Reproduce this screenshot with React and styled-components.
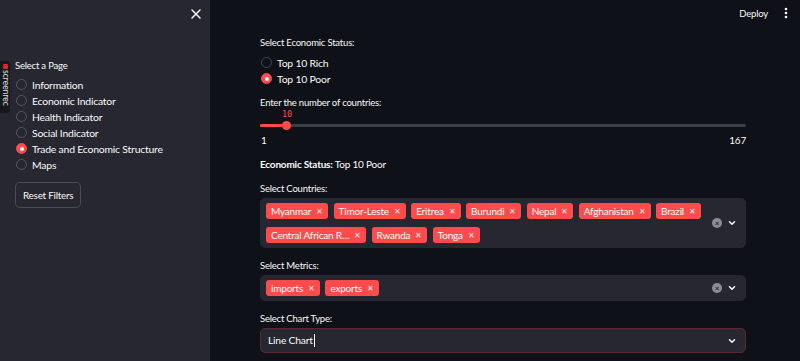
import React from 'react';
import styled, { createGlobalStyle } from 'styled-components';

const GlobalStyle = createGlobalStyle`
  html, body { margin: 0; padding: 0; background: #0e1117; }
  body { font-family: Lato, "Noto Sans", sans-serif; color: #fafafa; letter-spacing: -0.2px; }
  * { box-sizing: border-box; }
`;

const RED = '#ff4b4b';

const Page = styled.div`
  display: flex;
  width: 800px;
  height: 361px;
  overflow: hidden;
  background: #0e1117;
`;

const Sidebar = styled.aside`
  position: relative;
  width: 210px;
  flex: none;
  background: #262730;
  padding: 0 15px;
`;

const SideTop = styled.div`
  display: flex;
  justify-content: flex-end;
  height: 28px;
  padding-top: 7px;
  margin-right: -8px;
  color: #fafafa;
`;

const ScreenRec = styled.div`
  position: absolute;
  left: 0;
  top: 61px;
  width: 10px;
  height: 52px;
  background: #17181d;
  border-radius: 0 3px 3px 0;
  display: flex;
  flex-direction: column;
  align-items: center;
  padding-top: 3px;
  span.dot {
    width: 5px;
    height: 5px;
    background: #e02424;
    border-radius: 1px;
  }
  span.txt {
    writing-mode: vertical-rl;
    font-size: 8.5px;
    line-height: 9px;
    color: #e0e0e0;
    margin-top: 1px;
    letter-spacing: 0;
  }
`;

const Label = styled.div`
  font-size: ${p => p.$size || 9.5}px;
  color: #fafafa;
  line-height: 12px;
  margin-top: ${p => p.$mt || 0}px;
  margin-bottom: ${p => p.$mb || 0}px;
`;

const RadioGroup = styled.div`
  display: flex;
  flex-direction: column;
  gap: ${p => p.$gap || 5}px;
  margin-top: ${p => p.$mt || 0}px;
`;

const RadioRow = styled.div`
  display: flex;
  align-items: center;
  gap: 5px;
  height: 11px;
  font-size: 10.4px;
  color: #fafafa;
  padding-left: 1px;
`;

const Circle = styled.span`
  width: 11px;
  height: 11px;
  border-radius: 50%;
  flex: none;
  border: 1px solid ${p => (p.$on ? RED : 'rgba(250,250,250,0.22)')};
  background: ${p => (p.$on ? RED : 'transparent')};
  display: flex;
  align-items: center;
  justify-content: center;
  &::after {
    content: '';
    display: ${p => (p.$on ? 'block' : 'none')};
    width: 4px;
    height: 4px;
    border-radius: 50%;
    background: #fff;
  }
`;

const Button = styled.button`
  margin-top: 12px;
  height: 26px;
  padding: 0 7px;
  background: #262730;
  color: #fafafa;
  border: 1px solid rgba(250,250,250,0.18);
  border-radius: 5px;
  font-family: inherit;
  letter-spacing: -0.2px;
  font-size: 9.8px;
`;

const Main = styled.main`
  flex: 1;
  display: flex;
  flex-direction: column;
`;

const Header = styled.header`
  display: flex;
  justify-content: flex-end;
  align-items: center;
  gap: 16px;
  height: 26px;
  padding-right: 12px;
  font-size: 9.5px;
`;

const Content = styled.div`
  width: 486px;
  margin-left: 50px;
  padding-top: 11px;
`;

const SliderWrap = styled.div`
  position: relative;
  height: 28px;
  margin-top: 1px;
`;

const SliderValue = styled.div`
  position: absolute;
  left: 22px;
  top: -1px;
  font-family: "DejaVu Sans Mono", monospace;
  font-size: 8.5px;
  letter-spacing: 0;
  color: ${RED};
`;

const Track = styled.div`
  position: absolute;
  left: 0;
  right: 0;
  top: 14px;
  height: 3px;
  border-radius: 2px;
  background: #3b3d46;
`;

const Fill = styled.div`
  height: 100%;
  background: ${RED};
  border-radius: 2px;
`;

const Thumb = styled.div`
  position: absolute;
  top: -3px;
  width: 9px;
  height: 9px;
  margin-left: -4.5px;
  border-radius: 50%;
  background: ${RED};
`;

const Ticks = styled.div`
  display: flex;
  justify-content: space-between;
  font-size: 10px;
  line-height: 12px;
  margin-top: -4px;
  padding-left: 1px;
`;

const Status = styled.div`
  margin-top: 12px;
  font-size: 10px;
  b { font-weight: 700; }
`;

const Box = styled.div`
  display: flex;
  align-items: center;
  background: #262730;
  border-radius: 5px;
  border: 1px solid ${p => (p.$focus ? '#5b2a30' : '#262730')};
  padding: ${p => p.$pad || '4px 5px'};
  min-height: 25px;
`;

const Tags = styled.div`
  flex: 1;
  display: flex;
  flex-wrap: wrap;
  gap: 8px 5.5px;
`;

const Tag = styled.span`
  display: inline-flex;
  align-items: center;
  gap: 5px;
  height: 16px;
  padding: 0 5px;
  background: ${RED};
  border-radius: 3px;
  font-size: 10px;
  color: #fff;
  white-space: nowrap;
  i {
    font-style: normal;
    font-size: 8px;
    opacity: 0.9;
  }
`;

const Controls = styled.div`
  display: flex;
  align-items: center;
  gap: 5px;
  padding-right: 3px;
`;

const ClearIcon = styled.span`
  width: 10px;
  height: 10px;
  border-radius: 50%;
  background: #8b8d96;
  color: #262730;
  display: flex;
  align-items: center;
  justify-content: center;
  font-size: 8px;
  line-height: 1;
  font-weight: 700;
`;

const Chevron = () => (
  <svg width="10" height="10" viewBox="0 0 10 10">
    <path d="M2.5 3.8 L5 6.2 L7.5 3.8" stroke="#fafafa" strokeWidth="1.5" fill="none" strokeLinecap="round" strokeLinejoin="round" />
  </svg>
);

const Cursor = styled.span`
  display: inline-block;
  width: 1px;
  height: 13px;
  background: #fafafa;
  vertical-align: middle;
  margin-left: 1px;
`;

const SelectText = styled.span`
  flex: 1;
  font-size: 10.3px;
  padding-left: 2px;
`;

const countries = ['Myanmar', 'Timor-Leste', 'Eritrea', 'Burundi', 'Nepal', 'Afghanistan', 'Brazil', 'Central African R…', 'Rwanda', 'Tonga'];

const pages = ['Information', 'Economic Indicator', 'Health Indicator', 'Social Indicator', 'Trade and Economic Structure', 'Maps'];

export default function App() {
  return (
    <>
      <GlobalStyle />
      <Page>
        <Sidebar>
          <SideTop>
            <svg width="14" height="14" viewBox="0 0 14 14">
              <path d="M3 3 L11 11 M11 3 L3 11" stroke="#fafafa" strokeWidth="1.5" strokeLinecap="round" />
            </svg>
          </SideTop>
          <ScreenRec>
            <span className="dot" />
            <span className="txt">screenrec</span>
          </ScreenRec>
          <Label $mt={32}>Select a Page</Label>
          <RadioGroup $mt={7}>
            {pages.map(p => (
              <RadioRow key={p}>
                <Circle $on={p.startsWith('Trade')} />
                {p}
              </RadioRow>
            ))}
          </RadioGroup>
          <Button>Reset Filters</Button>
        </Sidebar>
        <Main>
          <Header>
            <span>Deploy</span>
            <svg width="4" height="12" viewBox="0 0 4 12">
              <circle cx="2" cy="2" r="1.3" fill="#fafafa" />
              <circle cx="2" cy="6" r="1.3" fill="#fafafa" />
              <circle cx="2" cy="10" r="1.3" fill="#fafafa" />
            </svg>
          </Header>
          <Content>
            <Label>Select Economic Status:</Label>
            <RadioGroup $mt={8} $gap={5}>
              <RadioRow><Circle />Top 10 Rich</RadioRow>
              <RadioRow><Circle $on />Top 10 Poor</RadioRow>
            </RadioGroup>
            <Label $mt={13}>Enter the number of countries:</Label>
            <SliderWrap>
              <SliderValue>10</SliderValue>
              <Track>
                <Fill style={{ width: `${(9 / 166) * 100}%` }} />
                <Thumb style={{ left: `${(9 / 166) * 100}%` }} />
              </Track>
            </SliderWrap>
            <Ticks><span>1</span><span>167</span></Ticks>
            <Status><b>Economic Status:</b> Top 10 Poor</Status>
            <Label $mt={13} $mb={3}>Select Countries:</Label>
            <Box>
              <Tags>
                {countries.map(c => <Tag key={c}>{c}<i>✕</i></Tag>)}
              </Tags>
              <Controls><ClearIcon>×</ClearIcon><Chevron /></Controls>
            </Box>
            <Label $mt={12} $mb={3}>Select Metrics:</Label>
            <Box>
              <Tags>
                <Tag>imports<i>✕</i></Tag>
                <Tag>exports<i>✕</i></Tag>
              </Tags>
              <Controls><ClearIcon>×</ClearIcon><Chevron /></Controls>
            </Box>
            <Label $mt={12} $mb={3}>Select Chart Type:</Label>
            <Box $focus $pad="0 5px">
              <SelectText>Line Chart<Cursor /></SelectText>
              <Controls><Chevron /></Controls>
            </Box>
          </Content>
        </Main>
      </Page>
    </>
  );
}
